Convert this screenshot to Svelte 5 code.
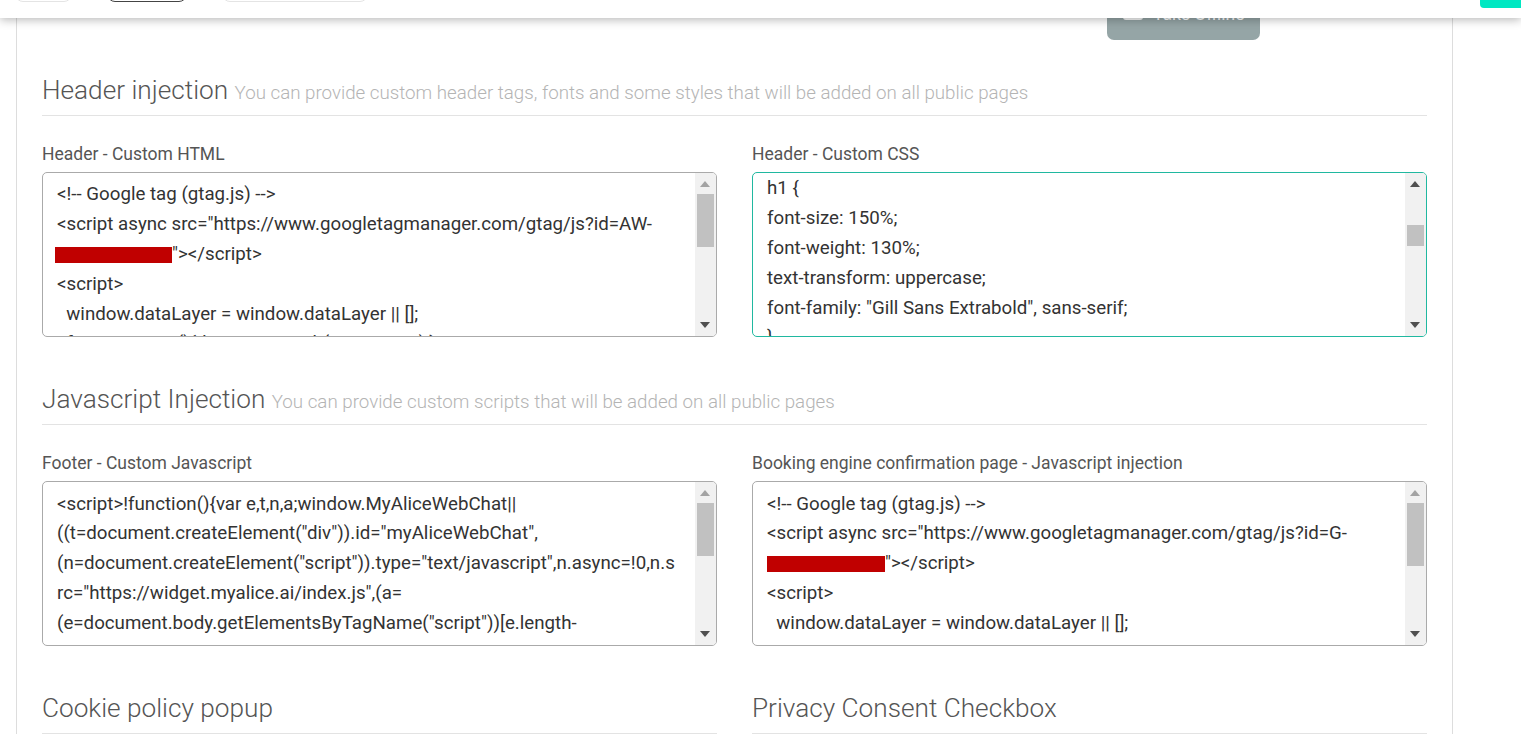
<script>
  const sections = [
    {
      title: 'Header injection',
      sub: 'You can provide custom header tags, fonts and some styles that will be added on all public pages',
      fields: [
        { label: 'Header - Custom HTML', thumbTop: 21, thumbH: 53, lines: ['<!-- Google tag (gtag.js) -->', '<script async src="https://www.googletagmanager.com/gtag/js?id=AW-', { red: 117, ml: -2, rest: '"></' + 'script>' }, '<script>', '  window.dataLayer = window.dataLayer || [];', '  function gtag(){dataLayer.push(arguments);}'] },
        { label: 'Header - Custom CSS', focus: true, thumbTop: 52, thumbH: 21, lines: ['h1 {', 'font-size: 150%;', 'font-weight: 130%;', 'text-transform: uppercase;', 'font-family: "Gill Sans Extrabold", sans-serif;', '}'] }
      ]
    },
    {
      title: 'Javascript Injection',
      sub: 'You can provide custom scripts that will be added on all public pages',
      fields: [
        { label: 'Footer - Custom Javascript', thumbTop: 21, thumbH: 53, lines: ['<script>!function(){var e,t,n,a;window.MyAliceWebChat||', '((t=document.createElement("div")).id="myAliceWebChat",', '(n=document.createElement("script")).type="text/javascript",n.async=!0,n.s', 'rc="https://widget.myalice.ai/index.js",(a=', '(e=document.body.getElementsByTagName("script"))[e.length-'] },
        { label: 'Booking engine confirmation page - Javascript injection', thumbTop: 21, thumbH: 63, lines: ['<!-- Google tag (gtag.js) -->', '<script async src="https://www.googletagmanager.com/gtag/js?id=G-', { red: 118, ml: 0, rest: '"></' + 'script>' }, '<script>', '  window.dataLayer = window.dataLayer || [];'] }
      ]
    }
  ];
</script>

<div class="page">
  <header class="topbar">
    <div class="tab t1"></div>
    <div class="tab t2"></div>
    <div class="tab t3"></div>
    <div class="accent"></div>
  </header>

  <main class="card">
    <div class="actions">
      <button class="offline">
        <svg width="20" height="16" viewBox="0 0 20 16"><rect x="0" y="0" width="20" height="16" rx="3" fill="#fff" fill-opacity=".9" /></svg>
        Take Offline
      </button>
    </div>

    {#each sections as s}
      <section class="section">
        <h2 class="head">{s.title} <small>{s.sub}</small></h2>
        <div class="cols">
          {#each s.fields as f}
            <div class="field">
              <div class="label">{f.label}</div>
              <div class="box" class:focus={f.focus}>
                <div class="text" class:scrolled={f.focus}>
                  {#each f.lines as l}
                    <div class="line">{#if typeof l === 'string'}{l}{:else}<span class="red" style="width:{l.red}px;margin-left:{l.ml}px"></span>{l.rest}{/if}</div>
                  {/each}
                </div>
                <div class="bar">
                  <svg class="arrow up" class:dark={f.focus} width="10" height="6" viewBox="0 0 10 6"><path d="M5 0 L10 6 L0 6 Z" /></svg>
                  <div class="thumb" style="top:{f.thumbTop}px;height:{f.thumbH}px"></div>
                  <svg class="arrow down dark" width="10" height="6" viewBox="0 0 10 6"><path d="M0 0 L10 0 L5 6 Z" /></svg>
                </div>
              </div>
            </div>
          {/each}
        </div>
      </section>
    {/each}

    <section class="section cols">
      <h2 class="head">Cookie policy popup</h2>
      <h2 class="head">Privacy Consent Checkbox</h2>
    </section>
  </main>
</div>

<style>
  :global(body) {
    margin: 0;
    background: #fff;
    font-family: Roboto, "Liberation Sans", sans-serif;
  }
  .page {
    height: 735px;
    overflow: hidden;
    position: relative;
  }
  .topbar {
    position: absolute;
    top: 0;
    left: 0;
    right: 0;
    height: 18px;
    background: #fff;
    box-shadow: 0 2px 10px rgba(0, 0, 0, 0.28);
    display: flex;
    gap: 35px;
    padding-left: 15px;
    z-index: 2;
  }
  .tab {
    height: 20px;
    margin-top: -18px;
    border: 1px solid #e4e4e4;
    border-radius: 8px;
    box-sizing: border-box;
  }
  .t1 { width: 57px; }
  .t2 { width: 80px; border: 1.5px solid #444; }
  .t3 { width: 146px; }
  .accent {
    margin-left: auto;
    width: 41px;
    height: 8px;
    background: #00e8c2;
    border-bottom-left-radius: 4px;
  }
  .card {
    margin: -10px 0 0 16px;
    width: 1437px;
    box-sizing: border-box;
    padding: 0 25px;
    border-left: 1px solid #ddd;
    border-right: 1px solid #ddd;
  }
  .actions {
    display: flex;
    justify-content: flex-end;
    padding-right: 167px;
    height: 85px;
  }
  .offline {
    width: 153px;
    height: 50px;
    border: 0;
    border-radius: 7px;
    background: #95a5a6;
    color: #fff;
    font: 400 17.5px/21px Roboto, sans-serif;
    display: flex;
    align-items: flex-start;
    gap: 10px;
    padding: 14px 0 0 16px;
    white-space: nowrap;
  }
  .section { margin-bottom: 47px; }
  .head {
    margin: 0;
    height: 30px;
    line-height: 30px;
    padding-bottom: 10px;
    border-bottom: 1px solid #e3e3e3;
    font-size: 26.2px;
    font-weight: 300;
    color: #555;
    white-space: nowrap;
    box-sizing: content-box;
  }
  .head small {
    font-size: 18.74px;
    font-weight: 300;
    color: #b4b4b4;
  }
  .cols {
    display: grid;
    grid-template-columns: 1fr 1fr;
    gap: 35px;
  }
  .field { margin-top: 27px; }
  .label {
    height: 22px;
    line-height: 22px;
    margin-bottom: 7px;
    font-size: 17.5px;
    color: #555;
  }
  .box {
    position: relative;
    height: 165px;
    box-sizing: border-box;
    border: 1px solid #aaa;
    border-radius: 5px;
    overflow: hidden;
    background: #fff;
  }
  .box.focus { border-color: #20b8a0; }
  .text {
    padding: 7px 22px 0 14px;
    font-size: 18.72px;
    line-height: 29.9px;
    color: #333;
  }
  .section:nth-of-type(2) .text { padding-top: 7.6px; }
  .text.scrolled { margin-top: -6px; }
  .line {
    white-space: pre;
    height: 29.9px;
  }
  .red {
    display: inline-block;
    height: 16px;
    background: #c00000;
    vertical-align: -3px;
  }
  .bar {
    position: absolute;
    top: 0;
    right: 0;
    bottom: 0;
    width: 21px;
    background: #f1f1f1;
  }
  .thumb {
    position: absolute;
    left: 2px;
    width: 17px;
    background: #c1c1c1;
  }
  .arrow {
    position: absolute;
    left: 5px;
    fill: #a3a3a3;
  }
  .arrow.dark { fill: #505050; }
  .up { top: 8px; }
  .down { bottom: 8px; }
</style>
